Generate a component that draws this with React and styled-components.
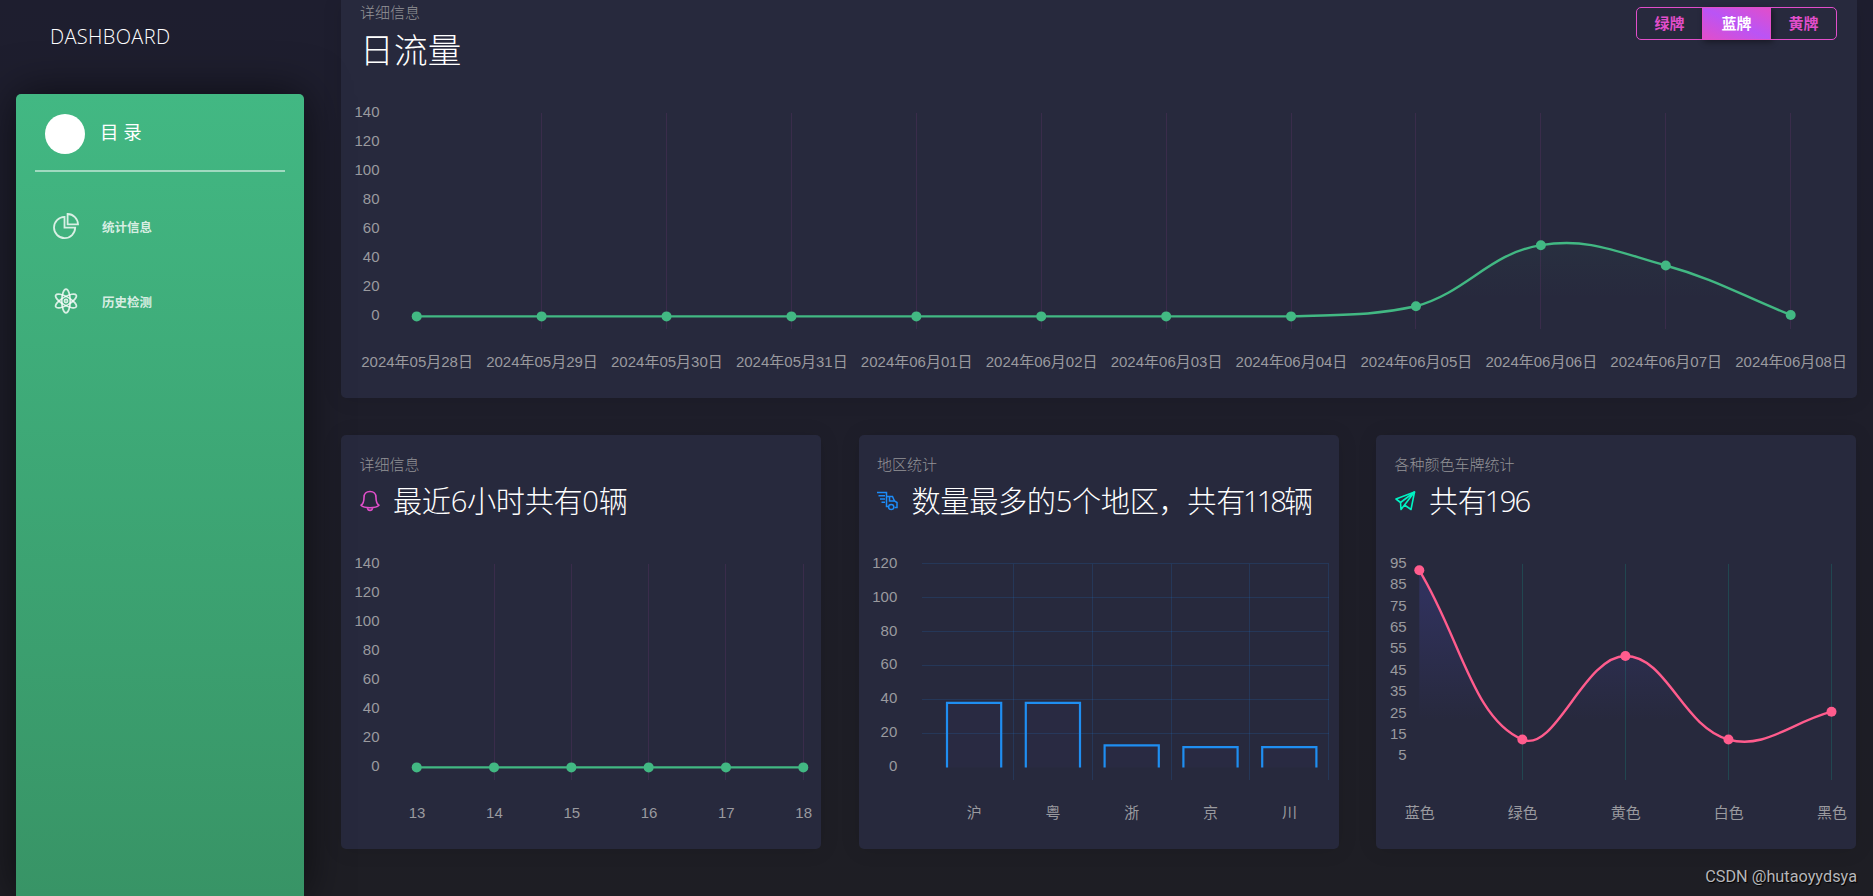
import styled, { createGlobalStyle } from "styled-components";

const GlobalStyle = createGlobalStyle`
  * {
    box-sizing: border-box;
  }
  body {
    margin: 0;
    overflow: hidden;
    background: #1e1e24;
    color: #fff;
    font-family: "Open Sans", "Noto Sans CJK SC", sans-serif;
  }
`

const Page = styled.div`
  display: flex;
  width: 1873px;
  height: 896px;
  overflow: hidden;
  background: linear-gradient(#1e1e2f, #1e1e24);
`

const Side = styled.aside`
  display: flex;
  flex-direction: column;
  flex: none;
  width: 341px;
  padding-left: 16px;
  z-index: 2;
`

const Brand = styled.div`
  height: 94px;
  padding: 24px 0 0 34px;
  font-size: 20px;
  font-weight: 300;
  line-height: 25px;
  letter-spacing: 0.35px;
`

const Menu = styled.nav`
  width: 288px;
  flex: 1;
  padding: 20px 19px 0;
  border-radius: 5px 5px 0 0;
  background: linear-gradient(#42b883, #389466);
  box-shadow: 0 0 45px rgba(0, 0, 0, 0.6);
`

const MenuHead = styled.div`
  display: flex;
  gap: 15px;
  height: 58px;
  padding-left: 10px;
  border-bottom: 2px solid rgba(255, 255, 255, 0.5);
  font-size: 18.5px;
  font-weight: 400;
  line-height: 36px;
`

const Dot = styled.span`
  width: 40px;
  height: 40px;
  border-radius: 50%;
  background: #fff;
`

const MenuItem = styled.a`
  display: flex;
  align-items: center;
  gap: 23px;
  height: 26px;
  margin: ${props => props.$first ? "41px" : "49px"} 0 0 18px;
  color: rgba(255, 255, 255, 0.8);
  font-size: 12.5px;
  font-weight: 700;
`

const Main = styled.main`
  display: flex;
  flex-direction: column;
  flex: none;
  width: 1516px;
`

const Card = styled.section`
  display: flex;
  flex-direction: column;
  height: ${props => props.$wide ? "398px" : "414px"};
  border-radius: ${props => props.$wide ? "0 0 5px 5px" : "5px"};
  background: #27293d;
  box-shadow: 0 1px 20px rgba(0, 0, 0, 0.1);
`

const CardRow = styled.div`
  display: grid;
  grid-template-columns: repeat(3, 480px);
  column-gap: 37.5px;
  margin-top: 37px;
`

const CardHead = styled.header`
  display: flex;
  justify-content: space-between;
  height: ${props => props.$wide ? "84px" : "100px"};
  padding: ${props => props.$wide ? "1px 20px 0 19px" : "18px 0 0 18.5px"};
`

const Category = styled.h5`
  margin: 0;
  color: #939397;
  font-size: 15px;
  font-weight: 300;
  line-height: 22px;
`

const Title = styled.h3`
  display: flex;
  align-items: center;
  gap: 13.5px;
  margin: 0;
  font-size: ${props => props.$wide ? "33.6px" : "29.2px"};
  font-weight: 300;
  line-height: ${props => props.$wide ? "54px" : "52px"};
  letter-spacing: ${props => props.$wide ? "0.3px" : "-0.35px"};
  white-space: nowrap;
`

const Digits = styled.span`
  margin-left: ${props => props.$pull}px;
  letter-spacing: ${props => props.$gap}px;
`

const Toggle = styled.div`
  display: flex;
  width: 201px;
  height: 33px;
  margin-top: 6px;
`

const ToggleButton = styled.button`
  flex: ${props => props.$active ? "0 0 69px" : "1"};
  margin-left: -1px;
  padding: 0;
  border: 1px solid #e14eca;
  background: ${props => props.$active ? "linear-gradient(to bottom left, #e14eca, #ba54f5, #e14eca)" : "transparent"};
  box-shadow: ${props => props.$active ? "2px 2px 6px rgba(0, 0, 0, 0.4)" : "none"};
  color: ${props => props.$active ? "#fff" : "#e14eca"};
  font: 700 15px/23px "Open Sans", "Noto Sans CJK SC", sans-serif;
  &:first-child {
    margin-left: 0;
    border-radius: 5px 0 0 5px;
  }
  &:last-child {
    border-radius: 0 5px 5px 0;
  }
`

const ChartSvg = styled.svg`
  display: block;
  text {
    fill: #9a9a9f;
    font: 15px "Liberation Sans", "Noto Sans CJK SC", sans-serif;
  }
`

const Watermark = styled.footer`
  margin-top: 14px;
  align-self: flex-end;
  color: #b6b6ba;
  font: 16.3px/28px Roboto, sans-serif;
  text-shadow: 1px 1px 1px #000;
`

const GREEN = "#42b883"
const PINK = "#ff5c8d"

const days = [
  "2024年05月28日", "2024年05月29日", "2024年05月30日", "2024年05月31日",
  "2024年06月01日", "2024年06月02日", "2024年06月03日", "2024年06月04日",
  "2024年06月05日", "2024年06月06日", "2024年06月07日", "2024年06月08日",
]
const plates = ["绿牌", "蓝牌", "黄牌"]
const ticks140 = [140, 120, 100, 80, 60, 40, 20, 0]

// area of every plot inside its svg
const TOP = 28.9
const ZERO = 232.4
const BOTTOM = 245

// smooth line through the points, tension 0.4, handles kept inside the plot
const spline = (pts) => {
  const cap = (y) => Math.max(TOP, Math.min(ZERO, y));
  const handles = pts.map((p, i) => {
    const prev = pts[i - 1] || p;
    const next = pts[i + 1] || p;
    const d01 = Math.hypot(p[0] - prev[0], p[1] - prev[1]);
    const d12 = Math.hypot(next[0] - p[0], next[1] - p[1]);
    const fa = (0.4 * d01) / (d01 + d12);
    const fb = (0.4 * d12) / (d01 + d12);
    const dx = next[0] - prev[0];
    const dy = next[1] - prev[1];
    return [p[0] - fa * dx, cap(p[1] - fa * dy), p[0] + fb * dx, cap(p[1] + fb * dy)];
  });
  return pts.slice(1).reduce((d, p, i) => {
    const a = handles[i];
    const b = handles[i + 1];
    return `${d} C${a[2]},${a[3]} ${b[0]},${b[1]} ${p[0]},${p[1]}`;
  }, `M${pts[0][0]},${pts[0][1]}`);
};

function YTicks({ ticks, x, max }) {
  return ticks.map((t) => (
    <text key={t} x={x} y={ZERO + 3.8 - (t / max) * (ZERO - TOP)} textAnchor="end">{t}</text>
  ));
}

function LineChart({ id, width, labels, values, ticks, max, x0, x1, tickX, color, grid, area }) {
  const step = (x1 - x0) / (labels.length - 1);
  const pts = values.map((v, i) => [x0 + i * step, ZERO - (v / max) * (ZERO - TOP)]);
  const line = spline(pts);
  return (
    <ChartSvg width={width} height="314">
      <defs>
        <linearGradient id={id} gradientUnits="userSpaceOnUse" x1="0" y1="60" x2="0" y2={area.end}>
          <stop offset="0" stopColor={area.color} stopOpacity={area.opacity} />
          <stop offset="1" stopColor={area.color} stopOpacity="0" />
        </linearGradient>
      </defs>
      {pts.slice(1).map(([x]) => (
        <line key={x} x1={Math.floor(x) + 0.5} x2={Math.floor(x) + 0.5} y1={TOP} y2={BOTTOM} stroke={grid} />
      ))}
      <path d={`${line} V${ZERO} H${x0} Z`} fill={`url(#${id})`} />
      <path d={line} fill="none" stroke={color} strokeWidth="2.4" />
      {pts.map(([x, y]) => <circle key={x} cx={x} cy={y} r="5" fill={color} />)}
      <YTicks ticks={ticks} x={tickX} max={max} />
      {labels.map((label, i) => (
        <text key={label} x={pts[i][0] + 0.4} y="282.5" textAnchor="middle">{label}</text>
      ))}
    </ChartSvg>
  );
}

function BarChart({ labels, values, ticks, max }) {
  const y = (v) => ZERO - (v / max) * (ZERO - TOP);
  return (
    <ChartSvg width="480" height="314">
      <g stroke="rgba(29,140,248,.15)">
        {ticks.slice(0, -1).map((t) => (
          <line key={t} x1="63" x2="470" y1={Math.floor(y(t)) + 0.5} y2={Math.floor(y(t)) + 0.5} />
        ))}
        {[154.5, 233.5, 312.5, 390.5, 469.5].map((x) => (
          <line key={x} x1={x} x2={x} y1={TOP} y2={BOTTOM} />
        ))}
      </g>
      {values.map((v, i) => (
        <path
          key={labels[i]}
          d={`M${88 + i * 78.8},${ZERO} V${y(v)} h54.2 V${ZERO}`}
          fill="rgba(72,72,176,.05)"
          stroke="#1f8ef1"
          strokeWidth="2.2"
        />
      ))}
      <YTicks ticks={ticks} x="38.3" max={max} />
      {labels.map((label, i) => (
        <text key={label} x={115.2 + i * 78.8} y="282.5" textAnchor="middle">{label}</text>
      ))}
    </ChartSvg>
  );
}

const PieIcon = () => (
  <svg width="26" height="26" viewBox="0 0 26 26" fill="none" stroke="currentColor" strokeWidth="1.8">
    <path d="M11.5 3.9A10.6 10.6 0 1 0 22.2 14.6H11.5Z" />
    <path d="M14.6 1A10.5 10.5 0 0 1 25 11.4H14.6Z" />
  </svg>
);

const AtomIcon = () => (
  <svg width="26" height="26" viewBox="0 0 26 26" fill="none" stroke="currentColor" strokeWidth="1.7">
    <ellipse cx="13" cy="13" rx="4.2" ry="11.8" />
    <ellipse cx="13" cy="13" rx="4.2" ry="11.8" transform="rotate(60 13 13)" />
    <ellipse cx="13" cy="13" rx="4.2" ry="11.8" transform="rotate(120 13 13)" />
    <circle cx="13" cy="13" r="1.6" />
  </svg>
);

const BellIcon = () => (
  <svg width="20" height="22" viewBox="0 0 20 22" fill="none" stroke="#e14eca" strokeWidth="1.6" strokeLinejoin="round">
    <path d="M10 1.5C6.3 1.5 4 4 4 7.4c0 5-.8 6.5-3 7.8C2.8 17 6 17.7 10 17.7s7.2-.7 9-2.5c-2.2-1.3-3-2.8-3-7.8C16 4 13.7 1.5 10 1.5Z" />
    <path d="M7.5 18.2c.2 1.4 1.2 2.2 2.5 2.2s2.3-.8 2.5-2.2" />
  </svg>
);

const TruckIcon = () => (
  <svg width="21" height="20" viewBox="0 0 21 20" fill="none" stroke="#1d8cf8" strokeWidth="1.5">
    <path d="M0 1.5h9.500v14H11M9.500 5.500h6l2 4.500 2.500 1.500v5h-2.500" />
    <path d="M1.500 4.800h6.500M3 8h5M4.500 11.200H8M12.500 6v4h4.500" />
    <circle cx="14.200" cy="16" r="2.600" />
  </svg>
);

const SendIcon = () => (
  <svg width="21" height="20" viewBox="0 0 21 20" fill="none" stroke="#00f2c3" strokeWidth="1.6" strokeLinejoin="round">
    <path d="M1 8 19.5 1 16 18.5 9.5 14 6 18.5 5.5 11.5Z" />
    <path d="M5.5 11.5 19.5 1 9.5 14" />
  </svg>
);

function Panel({ category, icon, title, children }) {
  return (
    <Card>
      <CardHead>
        <div>
          <Category>{category}</Category>
          <Title>{icon}<span>{title}</span></Title>
        </div>
      </CardHead>
      {children}
    </Card>
  );
}

export default function App() {
  return (
    <Page>
      <GlobalStyle />
      <Side>
        <Brand>DASHBOARD</Brand>
        <Menu>
          <MenuHead><Dot />目 录</MenuHead>
          <MenuItem $first><PieIcon />统计信息</MenuItem>
          <MenuItem><AtomIcon />历史检测</MenuItem>
        </Menu>
      </Side>
      <Main>
        <Card $wide>
          <CardHead $wide>
            <div>
              <Category>详细信息</Category>
              <Title $wide>日流量</Title>
            </div>
            <Toggle>
              {plates.map((plate, i) => (
                <ToggleButton key={plate} $active={i === 1}>{plate}</ToggleButton>
              ))}
            </Toggle>
          </CardHead>
          <LineChart
            id="daily"
            width={1516}
            labels={days}
            values={[0, 0, 0, 0, 0, 0, 0, 0, 7, 49, 35, 1]}
            ticks={ticks140}
            max={140}
            x0={75.7}
            x1={1449.7}
            tickX={38.5}
            color={GREEN}
            grid="rgba(225,78,202,.1)"
            area={{ color: GREEN, opacity: 0.12, end: 215 }}
          />
        </Card>
        <CardRow>
          <Panel category="详细信息" icon={<BellIcon />} title="最近6小时共有0辆">
            <LineChart
              id="hours"
              width={480}
              labels={["13", "14", "15", "16", "17", "18"]}
              values={[0, 0, 0, 0, 0, 0]}
              ticks={ticks140}
              max={140}
              x0={75.7}
              x1={462.3}
              tickX={38.5}
              color={GREEN}
              grid="rgba(225,78,202,.1)"
              area={{ color: GREEN, opacity: 0, end: 215 }}
            />
          </Panel>
          <Panel
            category="地区统计"
            icon={<TruckIcon />}
            title={<>数量最多的5个地区，共有<Digits $pull={-2} $gap={-3}>118</Digits>辆</>}
          >
            <BarChart
              labels={["沪", "粤", "浙", "京", "川"]}
              values={[38, 38, 13, 12, 12]}
              ticks={[120, 100, 80, 60, 40, 20, 0]}
              max={120}
            />
          </Panel>
          <Panel
            category="各种颜色车牌统计"
            icon={<SendIcon />}
            title={<>共有<Digits $pull={-2} $gap={-1.7}>196</Digits></>}
          >
            <LineChart
              id="colors"
              width={480}
              labels={["蓝色", "绿色", "黄色", "白色", "黑色"]}
              values={[92, 13, 52, 13, 26]}
              ticks={[95, 85, 75, 65, 55, 45, 35, 25, 15, 5]}
              max={95}
              x0={43.3}
              x1={455.5}
              tickX={30.7}
              color={PINK}
              grid="rgba(0,242,195,.15)"
              area={{ color: "#4848b0", opacity: 0.27, end: 185 }}
            />
          </Panel>
        </CardRow>
        <Watermark>CSDN @hutaoyydsya</Watermark>
      </Main>
    </Page>
  );
}
